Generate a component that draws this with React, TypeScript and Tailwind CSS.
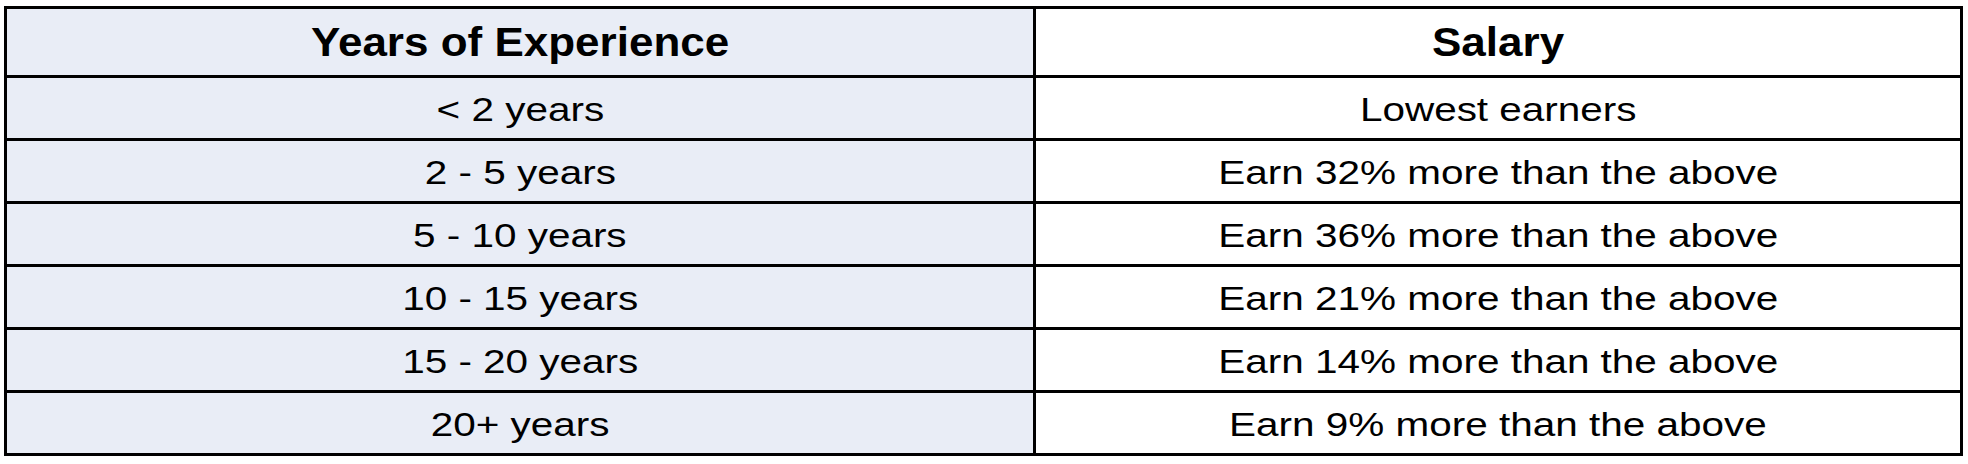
import React from "react";

const rows: [string, string][] = [
  ["< 2 years", "Lowest earners"],
  ["2 - 5 years", "Earn 32% more than the above"],
  ["5 - 10 years", "Earn 36% more than the above"],
  ["10 - 15 years", "Earn 21% more than the above"],
  ["15 - 20 years", "Earn 14% more than the above"],
  ["20+ years", "Earn 9% more than the above"],
];

export default function App() {
  return (
    <div
      className="w-[1968px] h-[464px] bg-white pt-[6px] pl-[4px]"
      style={{ fontFamily: '"Liberation Sans", Arial, sans-serif' }}
    >
      <div className="w-[1959px] border-[3px] border-black text-black">
        <div className="flex h-[69px] border-b-[3px] border-black">
          <div className="w-[1029px] border-r-[3px] border-black bg-[#e9edf6] flex items-center justify-center">
            <span className="inline-block text-[40px] leading-none font-bold scale-x-[1.1]">
              Years of Experience
            </span>
          </div>
          <div className="flex-1 flex items-center justify-center">
            <span className="inline-block text-[40px] leading-none font-bold scale-x-[1.1]">
              Salary
            </span>
          </div>
        </div>
        {rows.map(([y, s], i) => (
          <div
            key={i}
            className={
              i < rows.length - 1
                ? "flex h-[63px] border-b-[3px] border-black"
                : "flex h-[60px]"
            }
          >
            <div className="w-[1029px] border-r-[3px] border-black bg-[#e9edf6] flex items-center justify-center pt-[2px]">
              <span className="inline-block text-[34px] leading-none scale-x-[1.19]">{y}</span>
            </div>
            <div className="flex-1 flex items-center justify-center pt-[2px]">
              <span className="inline-block text-[34px] leading-none scale-x-[1.19]">{s}</span>
            </div>
          </div>
        ))}
      </div>
    </div>
  );
}
